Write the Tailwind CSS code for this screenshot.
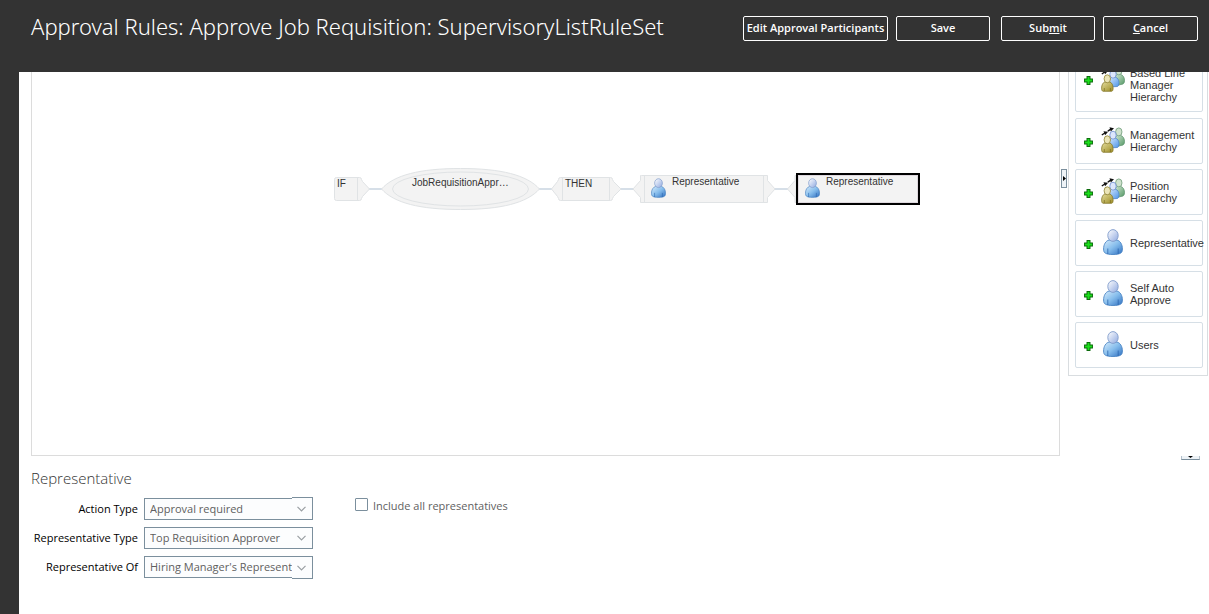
<!DOCTYPE html>
<html lang="en">
<head>
  <meta charset="UTF-8">
  <meta name="viewport" content="width=device-width, initial-scale=1.0">
  <title>Approval Rules</title>
  <script src="https://cdn.jsdelivr.net/npm/@tailwindcss/browser@4"></script>
</head>
<body class="bg-[#333333] font-['Open_Sans',sans-serif] text-[11px]">

  <!-- Shared icons -->
  <svg class="absolute size-0" aria-hidden="true">
    <defs>
      <linearGradient id="blueBody" x1="0" y1="0" x2="1" y2="1">
        <stop offset="0" stop-color="#d6ebfb" />
        <stop offset="0.5" stop-color="#86bdec" />
        <stop offset="1" stop-color="#2f6fc0" />
      </linearGradient>
      <linearGradient id="blueHead" x1="0" y1="0" x2="1" y2="1">
        <stop offset="0" stop-color="#ffffff" />
        <stop offset="1" stop-color="#8fa9e0" />
      </linearGradient>
      <linearGradient id="lightBlueBody" x1="0" y1="0" x2="1" y2="1">
        <stop offset="0" stop-color="#d3e8ff" />
        <stop offset="1" stop-color="#4d93e6" />
      </linearGradient>
      <linearGradient id="greenBody" x1="0" y1="0" x2="1" y2="1">
        <stop offset="0" stop-color="#d5ead6" />
        <stop offset="1" stop-color="#4f9460" />
      </linearGradient>
      <linearGradient id="goldBody" x1="0" y1="0" x2="1" y2="1">
        <stop offset="0" stop-color="#e3dc9c" />
        <stop offset="1" stop-color="#9c8c25" />
      </linearGradient>
    </defs>
    <symbol id="person" viewBox="0 0 20 26">
      <path d="M.6 20C.6 15.500 2.600 12 6 11h8c3.400 1 5.400 4.500 5.400 9 0 2.500-.6 3.500-2 4.300-1.500.8-3.900 1.200-7.400 1.200s-5.900-.4-7.400-1.200C1.200 23.500.6 22.500.6 20z" fill="url(#blueBody)" stroke="#4a84c4" stroke-width=".9" />
      <path d="M4.800 19.500V25M15.200 19.500V25" stroke="#2c66ae" stroke-width=".8" />
      <ellipse cx="10" cy="6.500" rx="5.200" ry="5.900" fill="url(#blueHead)" stroke="#7f9bcb" stroke-width=".9" />
    </symbol>
    <symbol id="group" viewBox="0 0 24 26">
      <path d="M13.300 20v-6c0-3 1.500-5 3-5.500h3.400c2.300.5 3.800 3 3.800 6 0 2-.7 3-1.500 3.500z" fill="url(#greenBody)" stroke="#5f9670" stroke-width=".8" />
      <ellipse cx="17.800" cy="4.900" rx="3.200" ry="4" fill="#cfe2cd" stroke="#6f9c78" stroke-width=".8" />
      <path d="M8 21v-5c0-2.500 1.500-4.300 3-4.800h3.400c2.300.5 3.600 3 3.600 5.300 0 2-.5 3.500-1.500 4z" fill="url(#lightBlueBody)" stroke="#4f86cc" stroke-width=".8" />
      <ellipse cx="12" cy="8.200" rx="3.200" ry="4" fill="#dce6fb" stroke="#6a8cd0" stroke-width=".8" />
      <path d="M.6 22.300c0-3.300 1.300-5.700 3.200-6.300h5c2 .6 3.300 3 3.300 6.300 0 1.800-.5 2.700-1.400 3H2c-.9-.3-1.400-1.200-1.400-3z" fill="url(#goldBody)" stroke="#877a2c" stroke-width=".8" />
      <path d="M3.300 22v3M9.400 22v3" stroke="#7d6f1e" stroke-width=".7" />
      <ellipse cx="6.300" cy="12.800" rx="3.200" ry="4" fill="#ebe5b8" stroke="#8f8334" stroke-width=".8" />
      <path d="M.8 8l3-2M6.800 4.200l3-2" stroke="#111" stroke-width="1.400" />
      <path d="M2.500 4.200l4.600.5-3 3.500zM8.500 .2l4.500 1-3.200 3.200z" fill="#111" />
    </symbol>
    <symbol id="plus" viewBox="0 0 8 8">
      <path d="M2.700.5h2.600v2.200h2.200v2.600H5.300v2.200H2.700V5.300H.5V2.700h2.200z" fill="#1be01b" stroke="#0b6b0b" stroke-width=".9" />
    </symbol>
  </svg>

  <div class="flex min-h-screen flex-col">
    <header class="flex h-[72px] shrink-0 items-start justify-between pl-[31px] pr-[11px] text-white">
      <h1 class="pt-2.5 font-['Noto_Sans','Open_Sans',sans-serif] text-[22px] leading-8 font-light whitespace-nowrap">Approval Rules: Approve Job Requisition: SupervisoryListRuleSet</h1>
      <div class="flex gap-[11px] pt-4 font-semibold">
        <div class="flex gap-2">
          <button class="h-[25px] w-[145px] rounded-xs border border-white whitespace-nowrap">Edit Approval Participants</button>
          <button class="h-[25px] w-[94px] rounded-xs border border-white">Save</button>
        </div>
        <div class="flex gap-2">
          <button class="h-[25px] w-[94px] rounded-xs border border-white">Sub<u>m</u>it</button>
          <button class="h-[25px] w-[95px] rounded-xs border border-white"><u>C</u>ancel</button>
        </div>
      </div>
    </header>

    <main class="ml-[19px] flex-1 bg-white">
      <div class="flex pr-px pl-3">

        <!-- Rule canvas -->
        <section class="relative h-[384px] flex-1 overflow-hidden border-x border-b border-[#dcdcdc]">
          <svg class="absolute top-[93px] left-[298px] font-['Liberation_Sans',Arial,sans-serif] text-[10px]" width="600" height="50" viewBox="330 165 600 50">
            <g stroke="#d6dfe8" stroke-width="2">
              <path d="M368 189h15M538 189h14M620 189h14M774 189h14" />
            </g>
            <g fill="#f3f3f3" stroke="#e0e3e5">
              <path d="M336.500 177.500h23q2 0 2 2l1 2 7 7.500-7 7.500-1 2q0 2-2 2h-23q-2 0-2-2v-19q0-2 2-2z" />
              <path d="M357.500 178v22" />
              <path d="M381.500 189C394 175 420 168.500 460.500 168.500S527 175 539.500 189C527 203 501 209.500 460.500 209.500S394 203 381.500 189z" />
              <ellipse cx="460.500" cy="189" rx="68" ry="17" />
              <path d="M560.500 177.500h50q2 0 2 2l1 2 7.500 7.500-7.500 7.500-1 2q0 2-2 2h-50q-2 0-2-2l-1-2-6-7.500 6-7.500 1-2q0-2 2-2z" />
              <path d="M562.500 178v22M609.500 178v22" />
              <path d="M641.500 175.500h126v5l7.500 8.500-7.500 8.500v5h-127v-5l-7.500-8.500 7.500-8.500v-5z" />
              <path d="M644.500 176v26M763.500 176v26" />
              <path d="M796 175.500h-1v5l-7.500 8.500 7.500 8.500v5h1z" />
            </g>
            <rect x="797" y="174" width="122" height="30" fill="#f3f3f3" stroke="#000" stroke-width="2" />
            <rect x="798.500" y="175.500" width="119" height="27" fill="none" stroke="#ded8de" />
            <use href="#person" x="651" y="178" width="15" height="20" />
            <use href="#person" x="805" y="178" width="15" height="20" />
            <g fill="#333">
              <text x="337" y="187">IF</text>
              <text x="412" y="186">JobRequisitionAppr…</text>
              <text x="565" y="187">THEN</text>
              <text x="672" y="185">Representative</text>
              <text x="826" y="185">Representative</text>
            </g>
          </svg>
        </section>

        <!-- Splitter -->
        <div class="w-2 shrink-0 px-px pt-[97px]">
          <button class="flex h-[19px] w-full items-center justify-center border border-[#7b8f9d] bg-[#eef3f7]" aria-label="Collapse pane">
            <svg class="shrink-0" width="3" height="5" viewBox="0 0 3 5"><path d="M0 0l3 2.500L0 5z" fill="#000" /></svg>
          </button>
        </div>

        <!-- Action palette, scrolled to its end -->
        <aside class="w-[140px] shrink-0">
          <ul class="flex h-[304px] flex-col justify-end gap-[5px] overflow-hidden border-x border-b border-[#d9dde0] pr-1 pb-[7px] pl-1.5 font-['Liberation_Sans',Arial,sans-serif] leading-3 text-[#333333]">
            <li class="mb-px flex h-[64px] shrink-0 items-center rounded-xs border border-[#d6dfe6] pl-2">
              <svg class="mr-2 size-[9px] shrink-0"><use href="#plus" /></svg>
              <svg class="mr-[5px] mb-0.5 h-[26px] w-6 shrink-0"><use href="#group" /></svg>
              <span class="pt-2.5">Based Line<br>Manager<br>Hierarchy</span>
            </li>
            <li class="flex h-[46px] shrink-0 items-center rounded-xs border border-[#d6dfe6] pl-2">
              <svg class="mt-0.5 mr-2 size-[9px] shrink-0"><use href="#plus" /></svg>
              <svg class="mr-[5px] mb-0.5 h-[26px] w-6 shrink-0"><use href="#group" /></svg>
              <span>Management<br>Hierarchy</span>
            </li>
            <li class="flex h-[46px] shrink-0 items-center rounded-xs border border-[#d6dfe6] pl-2">
              <svg class="mt-0.5 mr-2 size-[9px] shrink-0"><use href="#plus" /></svg>
              <svg class="mr-[5px] mb-0.5 h-[26px] w-6 shrink-0"><use href="#group" /></svg>
              <span>Position<br>Hierarchy</span>
            </li>
            <li class="flex h-[46px] shrink-0 items-center rounded-xs border border-[#d6dfe6] pl-2">
              <svg class="mt-0.5 mr-2 size-[9px] shrink-0"><use href="#plus" /></svg>
              <svg class="mr-[5px] mb-0.5 h-[26px] w-6 shrink-0"><use href="#person" /></svg>
              <span>Representative</span>
            </li>
            <li class="flex h-[46px] shrink-0 items-center rounded-xs border border-[#d6dfe6] pl-2">
              <svg class="mt-0.5 mr-2 size-[9px] shrink-0"><use href="#plus" /></svg>
              <svg class="mr-[5px] mb-0.5 h-[26px] w-6 shrink-0"><use href="#person" /></svg>
              <span>Self Auto<br>Approve</span>
            </li>
            <li class="flex h-[46px] shrink-0 items-center rounded-xs border border-[#d6dfe6] pl-2">
              <svg class="mt-0.5 mr-2 size-[9px] shrink-0"><use href="#plus" /></svg>
              <svg class="mr-[5px] mb-0.5 h-[26px] w-6 shrink-0"><use href="#person" /></svg>
              <span>Users</span>
            </li>
          </ul>
        </aside>
      </div>

      <!-- Selected node details -->
      <section class="flex items-start justify-between pr-[9px] pl-3">
        <div>
          <h2 class="pt-3 text-[15px] leading-5 font-light text-[#333333]">Representative</h2>
          <div class="flex items-start gap-[42px] pt-2.5">
            <div class="grid grid-cols-[107px_169px] items-center gap-x-1.5 gap-y-[7px] font-medium">
              <label for="actionType" class="text-right whitespace-nowrap text-black">Action Type</label>
              <div class="relative">
                <select id="actionType" class="block h-[22px] w-full appearance-none border border-[#7b8f9d] bg-[#fcfdfe] pr-5 pl-[5px] text-[#5f5f5f]">
                  <option>Approval required</option>
                </select>
                <span class="pointer-events-none absolute -top-px right-0 bottom-0 flex w-[21px] items-center justify-center border-y border-r border-[#7b8f9d] bg-[#fcfdfe] pr-0.5">
                  <svg width="9" height="6" viewBox="0 0 9 6" fill="none"><path d="M.5.8l4 4 4-4" stroke="#9a9fa3" stroke-width="1.200" /></svg>
                </span>
              </div>

              <label for="repType" class="text-right whitespace-nowrap text-black">Representative Type</label>
              <div class="relative">
                <select id="repType" class="block h-[22px] w-full appearance-none border border-[#7b8f9d] bg-[#fcfdfe] pr-5 pl-[5px] text-[#5f5f5f]">
                  <option>Top Requisition Approver</option>
                </select>
                <span class="pointer-events-none absolute inset-y-0 right-0 flex w-[21px] items-center justify-center border-y border-r border-[#7b8f9d] bg-[#fcfdfe] pr-0.5">
                  <svg width="9" height="6" viewBox="0 0 9 6" fill="none"><path d="M.5.8l4 4 4-4" stroke="#9a9fa3" stroke-width="1.200" /></svg>
                </span>
              </div>

              <label for="repOf" class="text-right whitespace-nowrap text-black">Representative Of</label>
              <div class="relative">
                <select id="repOf" class="block h-[22px] w-full appearance-none border border-[#7b8f9d] bg-[#fcfdfe] pr-5 pl-[5px] text-[#5f5f5f]">
                  <option>Hiring Manager's Representative</option>
                </select>
                <span class="pointer-events-none absolute top-0 right-0 -bottom-px flex w-[21px] items-center justify-center border-y border-r border-[#7b8f9d] bg-[#fcfdfe] pr-0.5">
                  <svg width="9" height="6" viewBox="0 0 9 6" fill="none"><path d="M.5.8l4 4 4-4" stroke="#9a9fa3" stroke-width="1.200" /></svg>
                </span>
              </div>
            </div>

            <div class="flex items-start gap-[5px] font-medium text-[#5f5f5f]">
              <input type="checkbox" id="includeAll" class="size-[13px] appearance-none rounded-[1px] border border-[#7b8f9d] bg-white checked:bg-[#7b8f9d]">
              <label for="includeAll" class="leading-4">Include all representatives</label>
            </div>
          </div>
        </div>
        <button class="flex h-1 w-[19px] justify-center border-x border-b border-[#b4c0ca] border-b-[#7b8f9d] bg-[#eef3f7]" aria-label="Scroll down">
          <svg width="5" height="2" viewBox="0 0 5 2"><path d="M0 0h5L2.500 2z" fill="#000" /></svg>
        </button>
      </section>
    </main>
  </div>

</body>
</html>
